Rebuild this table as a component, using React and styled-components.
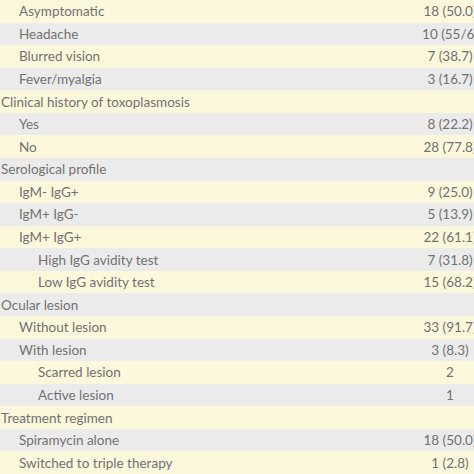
import React from 'react';
import styled, { createGlobalStyle } from 'styled-components';

const GlobalStyle = createGlobalStyle`
  html, body {
    margin: 0;
    padding: 0;
    background: #fdf7dc;
    overflow: hidden;
  }
`;

const rows = [
  { label: 'Asymptomatic', level: 1, value: '18 (50.0)' },
  { label: 'Headache', level: 1, value: '10 (55/6)' },
  { label: 'Blurred vision', level: 1, value: '7 (38.7)' },
  { label: 'Fever/myalgia', level: 1, value: '3 (16.7)' },
  { label: 'Clinical history of toxoplasmosis', level: 0, value: '' },
  { label: 'Yes', level: 1, value: '8 (22.2)' },
  { label: 'No', level: 1, value: '28 (77.8)' },
  { label: 'Serological profile', level: 0, value: '' },
  { label: 'IgM- IgG+', level: 1, value: '9 (25.0)' },
  { label: 'IgM+ IgG-', level: 1, value: '5 (13.9)' },
  { label: 'IgM+ IgG+', level: 1, value: '22 (61.1)' },
  { label: 'High IgG avidity test', level: 2, value: '7 (31.8)' },
  { label: 'Low IgG avidity test', level: 2, value: '15 (68.2)' },
  { label: 'Ocular lesion', level: 0, value: '' },
  { label: 'Without lesion', level: 1, value: '33 (91.7)' },
  { label: 'With lesion', level: 1, value: '3 (8.3)' },
  { label: 'Scarred lesion', level: 2, value: '2' },
  { label: 'Active lesion', level: 2, value: '1' },
  { label: 'Treatment regimen', level: 0, value: '' },
  { label: 'Spiramycin alone', level: 1, value: '18 (50.0)' },
  { label: 'Switched to triple therapy', level: 1, value: '1 (2.8)' },
];

const Table = styled.div`
  display: grid;
  grid-template-rows: repeat(21, 1fr);
  height: 474px;
  width: 474px;
  font-family: Lato, "Open Sans", sans-serif;
  font-size: 13.5px;
  color: #727272;
`;

const Row = styled.div`
  display: grid;
  grid-template-columns: 1fr 48px;
  align-items: center;
  background: ${(p) => (p.$shade ? '#ebebeb' : '#fdf7dc')};
  white-space: nowrap;
`;

const Label = styled.div`
  padding-left: ${(p) => (p.$level === 0 ? 1 : p.$level === 1 ? 19 : 38)}px;
`;

const Value = styled.div`
  display: flex;
  justify-content: center;
`;

export default function App() {
  return (
    <>
      <GlobalStyle />
      <Table>
        {rows.map((r, i) => (
          <Row key={i} $shade={i % 2 === 1}>
            <Label $level={r.level}>{r.label}</Label>
            <Value>{r.value}</Value>
          </Row>
        ))}
      </Table>
    </>
  );
}
